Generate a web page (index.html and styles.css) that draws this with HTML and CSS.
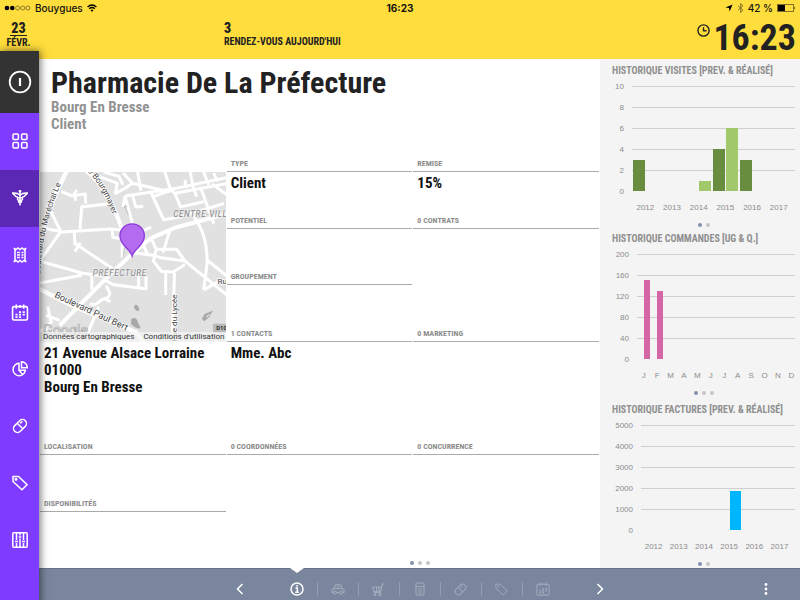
FILE: index.html
```html
<!DOCTYPE html>
<html lang="fr">
<head>
  <meta charset="UTF-8" />
  <meta name="viewport" content="width=device-width, initial-scale=1.0"/>
  <title>Pharmacie De La Préfecture</title>
  <link rel="stylesheet" href="styles.css">
</head>
<body>
  <!-- shared icons -->
  <svg width="0" height="0" class="sprite">
    <symbol id="i-calendar" viewBox="0 0 16 16">
      <rect x="1" y="2.5" width="14" height="12.5" rx="1.2"/>
      <path d="M4.5 0.5v4M11.5 0.5v4M8 1v2.5"/>
      <path d="M7 7.7h2M10.5 7.7h2M3.7 10h2M7 10h2M10.5 10h2M3.7 12.3h2M7 12.3h2" stroke-width="1.6"/>
    </symbol>
    <symbol id="i-pill" viewBox="0 0 16 16">
      <g transform="rotate(-45 8 8)">
        <rect x="0.5" y="4" width="15" height="8" rx="4"/>
        <path d="M8 4v8M10 6.3h3"/>
      </g>
    </symbol>
    <symbol id="i-tag" viewBox="0 0 16 16">
      <path d="M1 1.5h5.5l8.5 8.2-5 5L1 6.5z"/>
      <circle cx="4" cy="4.3" r="0.8"/>
    </symbol>
  </svg>

  <div class="app">
    <header class="header">
      <div class="status">
        <div class="carrier">
          <svg width="27" height="8" viewBox="0 0 27 8">
            <circle cx="3" cy="4" r="2.3"/><circle cx="8.3" cy="4" r="2.3"/>
            <g fill="none" stroke="#5f5426" stroke-width="0.7"><circle cx="13.6" cy="4" r="2"/><circle cx="18.8" cy="4" r="2"/><circle cx="24" cy="4" r="2"/></g>
          </svg>
          <span>Bouygues</span>
          <svg width="10" height="8" viewBox="0 0 10 8" fill="none" stroke="#000" stroke-width="1.4">
            <path d="M0.6 3Q5-1.2 9.4 3M2.3 4.8Q5 2.4 7.7 4.8"/><path d="M5 5.2L6.4 6.5 5 7.8 3.6 6.5z" fill="#000" stroke="none"/>
          </svg>
        </div>
        <b>16:23</b>
        <div class="battery">
          <svg width="8" height="8" viewBox="0 0 8 8"><path d="M7.6 0.4L4.6 7.6 4 4 0.4 3.6z"/></svg>
          <svg width="7" height="10" viewBox="0 0 7 10" fill="none" stroke="#6b5e2a" stroke-width="0.8"><path d="M1 2.8l5 4.4L3.6 9.4V0.6L6 2.8 1 7.2"/></svg>
          <span>42 %</span>
          <svg width="19" height="8" viewBox="0 0 19 8"><rect x="0.5" y="0.5" width="16" height="7" fill="none" stroke="#5f5426" stroke-width="0.8"/><rect x="1" y="1" width="7" height="6"/><path d="M17.5 2.5q1.4 1.5 0 3z"/></svg>
        </div>
      </div>
      <div class="topbar">
        <div class="date"><b>23</b><span>FÉVR.</span></div>
        <div class="meetings"><b>3</b><span>RENDEZ-VOUS AUJOURD'HUI</span></div>
        <div class="clock">
          <svg width="13" height="13" viewBox="0 0 13 13" fill="none" stroke="#222" stroke-width="1.4"><circle cx="6.5" cy="6.5" r="5.6"/><path d="M6.5 3.2v3.5h3"/></svg>
          <span>16:23</span>
        </div>
      </div>
    </header>

    <nav class="sidebar">
      <a href="#" class="power" aria-label="Accueil">
        <svg width="24" height="24" viewBox="0 0 24 24"><circle cx="12" cy="12" r="10.3" stroke-width="1.8"/><path d="M12 8v8" stroke-width="2.2"/></svg>
      </a>
      <div class="side-items">
        <a href="#" aria-label="Tableau de bord">
          <svg width="16" height="16" viewBox="0 0 16 16"><rect x="1" y="1" width="5.4" height="5.4" rx="1"/><rect x="9.6" y="1" width="5.4" height="5.4" rx="1"/><rect x="1" y="9.6" width="5.4" height="5.4" rx="1"/><rect x="9.6" y="9.6" width="5.4" height="5.4" rx="1"/></svg>
        </a>
        <a href="#" class="active" aria-label="Pharmacies">
          <svg width="16" height="16" viewBox="0 0 16 16" stroke-width="1.2"><path d="M8 1.5v14"/><circle cx="8" cy="1.3" r="0.7"/><path d="M8 5.2C6 3 3.5 2.8 0.7 3c0.4 1.4 1 2 2.2 2.2 0.3 1 1 1.5 2 1.6 0.5 0.8 1.6 1.2 3.1 0.9M8 5.2c2-2.2 4.5-2.4 7.3-2.2-0.4 1.4-1 2-2.2 2.2-0.3 1-1 1.5-2 1.6-0.5 0.8-1.6 1.2-3.1 0.9"/><path d="M5.7 8.2c-1 1.5 0.8 2 2.3 2.3 1.8 0.4 2.2 1.4 0.3 2.4M10.3 8.2c1 1.5-0.8 2-2.3 2.3-1.8 0.4-2.2 1.4-0.3 2.4"/></svg>
        </a>
        <a href="#" aria-label="Commandes">
          <svg width="14" height="16" viewBox="0 0 14 16"><path d="M1 1l2 1.5L5 1l2 1.5L9 1l2 1.5L13 1l-1 2v10l1 2-2-1.5L9 15l-2-1.5L5 15l-2-1.5L1 15l1-2V3z"/><path d="M4 5.5h3M4 8h3M4 10.5h3M8.5 5.5h2M8.5 8h2M8.5 10.5h2"/></svg>
        </a>
        <a href="#" aria-label="Agenda"><svg width="18" height="17"><use href="#i-calendar"/></svg></a>
        <a href="#" aria-label="Statistiques">
          <svg width="16" height="16" viewBox="0 0 16 16"><path d="M7 2.3A6.2 6.2 0 1 0 13.4 9.2H7z"/><path d="M9.5 0.8v5.9h5.8A6 6 0 0 0 9.5 0.8z"/><path d="M7 9.2l3.8 4.6"/></svg>
        </a>
        <a href="#" aria-label="Produits"><svg width="16" height="16"><use href="#i-pill"/></svg></a>
        <a href="#" aria-label="Promotions"><svg width="16" height="16"><use href="#i-tag"/></svg></a>
        <a href="#" aria-label="Réglages">
          <svg width="16" height="16" viewBox="0 0 16 16"><rect x="0.8" y="0.8" width="14.4" height="14.4" rx="1"/><path d="M4.5 1v7M4.5 11v4M8 1v2.500M8 6.500v8.500M11.500 1v7M11.500 11v4M3 9.500h3M6.700 5h2.600M10 9.500h3" /></svg>
        </a>
      </div>
    </nav>

    <main class="main">
      <section class="client">
        <div class="title">
          <h1>Pharmacie De La Préfecture</h1>
          <p>Bourg En Bresse</p>
          <p>Client</p>
        </div>

        <h3 class="c2 r2">TYPE</h3>
        <p class="value c2 r3">Client</p>
        <h3 class="c3 r2">REMISE</h3>
        <p class="value c3 r3">15%</p>
        <h3 class="c2 r3">POTENTIEL</h3>
        <h3 class="c3 r3">0 CONTRATS</h3>
        <h3 class="c2 r4">GROUPEMENT</h3>
        <h3 class="c2 r5">1 CONTACTS</h3>
        <p class="value c2 r6">Mme. Abc</p>
        <h3 class="c3 r5">0 MARKETING</h3>
        <p class="value c1 r6">21 Avenue Alsace Lorraine<br>01000<br>Bourg En Bresse</p>
        <h3 class="c1 r7">LOCALISATION</h3>
        <h3 class="c2 r7">0 COORDONNÉES</h3>
        <h3 class="c3 r7">0 CONCURRENCE</h3>
        <h3 class="c1 r8">DISPONIBILITÉS</h3>

        <div class="map">
          <svg viewBox="12 27 558 501" preserveAspectRatio="xMidYMid slice">
            <rect x="12" y="27" width="558" height="501" fill="#e1e1e1"/>
            <g fill="none" stroke="#fff" stroke-width="9" stroke-linejoin="round">
              <path d="M0 330C10 240 40 130 98 20" stroke-width="13"/>
              <path d="M150 20C200 60 235 120 262 205" stroke-width="12"/>
              <path d="M0 365L120 425 300 500 330 540" stroke-width="13"/>
              <path d="M75 480L215 338 290 268 345 222 420 190 580 148" stroke-width="12"/>
              <path d="M70 205L225 195 270 200M20 285L78 203 50 145M118 200L120 238 235 315M136 236L120 262M78 203L15 190"/>
              <path d="M10 288L140 325 205 335M15 355L140 332M170 335V375M205 345L235 360 330 372V335M308 335V370"/>
              <path d="M80 85L110 97 150 92 152 120M115 97L125 80M120 97L122 112M135 195L140 130 228 120"/>
              <path d="M190 40L245 60 240 90 268 75 290 60 400 85M205 27L250 40 262 65M268 98L420 75 575 42M268 98L290 180M290 60L262 30M268 98L262 130M290 95L300 130 322 128"/>
              <path d="M305 27L315 82M385 25L402 78 415 90 575 60M342 82L382 168 430 160 560 120M460 25L470 75M500 27L515 65M530 30L540 55M350 100L400 82M415 90L432 130 500 115M490 70L530 180M525 62L570 95"/>
              <path d="M470 155C500 200 512 240 510 300L500 375M510 287L570 335M445 50L448 75M470 75L480 100"/>
              <path d="M290 265L350 273 375 280 445 290 575 395M345 222L360 255 352 290 375 320 410 322 445 300M360 255L420 255 445 290M380 265L400 200M320 240L335 270"/>
              <path d="M388 325V390M414 325L408 500M260 195V280M230 195L232 220 262 225M290 180L310 205 345 190"/>
              <path d="M165 415C185 430 195 395 215 400C235 380 210 375 215 362M205 400L225 410M155 510L190 425M40 425L50 470 15 500M35 450L75 465M30 490L70 505M500 375L545 350"/>
            </g>
            <path d="M300 418q14 8 8 20q-12-2-14-14zM286 462q14-10 20 8l8 18q-14 4-28-12zM495 460l8-14 25-10-12 20-14 12z" fill="#a9a9a9"/>
            <path d="M508 455l10-8" stroke="#ddd" stroke-width="4"/>
            <path d="M262 280l4-30M268 130l10 24M266 134l2-8 7 4" fill="none" stroke="#aaa" stroke-width="2"/>
            <path id="marechal" d="M18 330C20 215 52 115 98 22" fill="none"/>
            <path id="bourgmayer" d="M148 16C195 60 222 115 242 190" fill="none"/>
            <g class="streets">
              <text><textPath href="#marechal">Boulevard du Maréchal Le</textPath></text>
              <text><textPath href="#bourgmayer">ue Bourgmayer</textPath></text>
              <text transform="translate(58 396) rotate(25)" font-size="27">Boulevard Paul Bert</text>
              <text transform="translate(420 528) rotate(-90)">Rue du Lycée</text>
              <text x="541" y="357">Rue</text>
            </g>
            <g class="areas">
              <text x="410" y="160">CENTRE-VILLE</text>
              <text x="173" y="333">PRÉFECTURE</text>
            </g>
            <rect x="528" y="475" width="50" height="27" fill="#b9b9b9"/>
            <text x="537" y="495" class="road">D1083</text>
            <text x="26" y="508" class="google">Google</text>
            <path d="M289 275C283 252 253 245 253 215a36 35 0 0 1 72 0C325 245 295 252 289 275z" fill="#b36cf0" stroke="#8d3bd8" stroke-width="4"/>
          </svg>
          <div class="credits"><a href="#">Données cartographiques</a><a href="#">Conditions d'utilisation</a></div>
        </div>
      </section>

      <aside class="charts">
        <section class="chart visits">
          <h2>HISTORIQUE VISITES [PREV. &amp; RÉALISÉ]</h2>
          <div class="graph">
            <div class="scale"><span>10</span><span>8</span><span>6</span><span>4</span><span>2</span><span>0</span></div>
            <div class="plot">
              <div class="group"><i style="height:30%"></i><i></i></div>
              <div class="group"></div>
              <div class="group"><i></i><i style="height:10%"></i></div>
              <div class="group"><i style="height:40%"></i><i style="height:60%"></i></div>
              <div class="group"><i style="height:30%"></i><i></i></div>
              <div class="group"></div>
            </div>
            <div class="labels"><span>2012</span><span>2013</span><span>2014</span><span>2015</span><span>2016</span><span>2017</span></div>
          </div>
          <div class="dots"><i class="on"></i><i></i></div>
        </section>
        <section class="chart orders">
          <h2>HISTORIQUE COMMANDES [UG &amp; Q.]</h2>
          <div class="graph">
            <div class="scale"><span>200</span><span>160</span><span>120</span><span>80</span><span>40</span><span>0</span></div>
            <div class="plot">
              <div class="group"><i></i><i style="height:75%"></i></div>
              <div class="group"><i></i><i style="height:65%"></i></div>
              <div class="group"></div><div class="group"></div><div class="group"></div><div class="group"></div><div class="group"></div>
              <div class="group"></div><div class="group"></div><div class="group"></div><div class="group"></div><div class="group"></div>
            </div>
            <div class="labels"><span>J</span><span>F</span><span>M</span><span>A</span><span>M</span><span>J</span><span>J</span><span>A</span><span>S</span><span>O</span><span>N</span><span>D</span></div>
          </div>
          <div class="dots"><i class="on"></i><i></i><i></i></div>
        </section>
        <section class="chart bills">
          <h2>HISTORIQUE FACTURES [PREV. &amp; RÉALISÉ]</h2>
          <div class="graph">
            <div class="scale"><span>5000</span><span>4000</span><span>3000</span><span>2000</span><span>1000</span><span>0</span></div>
            <div class="plot">
              <div class="group"></div><div class="group"></div><div class="group"></div>
              <div class="group"><i></i><i style="height:37%"></i></div>
              <div class="group"></div><div class="group"></div>
            </div>
            <div class="labels"><span>2012</span><span>2013</span><span>2014</span><span>2015</span><span>2016</span><span>2017</span></div>
          </div>
          <div class="dots"><i class="on"></i><i></i></div>
        </section>
      </aside>
      <div class="dots pages"><i class="on"></i><i></i><i></i></div>
    </main>

    <nav class="toolbar">
      <div class="tools">
        <button class="arrow" aria-label="Précédent"><svg width="8" height="12" viewBox="0 0 8 12"><path d="M6.500 1L1.500 6l5 5"/></svg></button>
        <div class="tabs">
          <button class="current" aria-label="Informations"><svg width="14" height="14" viewBox="0 0 14 14"><circle cx="7" cy="7" r="6"/><path d="M5.500 6h1.800v4M5.200 10.300h3.600M6.300 3.700h1.600" stroke-width="1.500"/></svg></button>
          <button aria-label="Déplacements"><svg width="14" height="12" viewBox="0 0 14 12"><path d="M2.500 9.500H1V6.500l2-1 1.500-3.500q3-1 5.500 0l1 3.500 2 1v3h-1.500M5.500 9.500h3M3 5.500h8M7 2v3.500"/><circle cx="4" cy="9.500" r="1.500"/><circle cx="10" cy="9.500" r="1.500"/></svg></button>
          <button aria-label="Panier"><svg width="13" height="13" viewBox="0 0 13 13"><path d="M0.500 4h9L8.500 8.500H2zM12.500 1h-2L8.500 9.500H2M4.500 4v4.500M7 4v4.500"/><circle cx="3" cy="11.500" r="1"/><circle cx="8" cy="11.500" r="1"/></svg></button>
          <button aria-label="Calculatrice"><svg width="10" height="14" viewBox="0 0 10 14"><rect x="1" y="1" width="8" height="12" rx="1"/><path d="M1 4.500h8M3 7h4M3 9h4M3 11h4"/></svg></button>
          <button aria-label="Produits"><svg width="13" height="13"><use href="#i-pill"/></svg></button>
          <button aria-label="Promotions"><svg width="13" height="13"><use href="#i-tag"/></svg></button>
          <button aria-label="Agenda"><svg width="14" height="14"><use href="#i-calendar"/></svg></button>
        </div>
        <button class="arrow" aria-label="Suivant"><svg width="8" height="12" viewBox="0 0 8 12"><path d="M1.500 1l5 5-5 5"/></svg></button>
      </div>
      <button class="more" aria-label="Plus"><svg width="4" height="12" viewBox="0 0 4 12"><circle cx="2" cy="1.500" r="1.400"/><circle cx="2" cy="6" r="1.400"/><circle cx="2" cy="10.500" r="1.400"/></svg></button>
    </nav>
  </div>
</body>
</html>
```
FILE: styles.css
```css
* {
  box-sizing: border-box;
}
body {
  margin: 0;
  font-family: "Liberation Sans Narrow", "Arial Narrow", "Roboto Condensed", "Liberation Sans", sans-serif;
  font-weight: bold;
  color: #222;
  background: white;
}
h1, h2, h3, p {
  margin: 0;
}
a {
  color: inherit;
  text-decoration: none;
}
.sprite {
  position: absolute;
}
.app {
  display: grid;
  grid-template-columns: 39px 1fr;
  grid-template-rows: auto 1fr 41px;
  min-height: 100vh;
}

/* yellow header */
.header {
  grid-column: 1 / -1;
  background: #ffdd3c;
  height: 59px;
}
.status {
  display: grid;
  grid-template-columns: 1fr auto 1fr;
  align-items: center;
  height: 16px;
  padding: 0 4px;
  font-family: Inter, "Liberation Sans", sans-serif;
  font-size: 10px;
  font-weight: 500;
  color: #111;
}
.carrier, .battery {
  display: flex;
  align-items: center;
  gap: 4px;
}
.battery {
  justify-content: flex-end;
}
.topbar {
  display: grid;
  grid-template-columns: 37px calc((100% - 239px) / 3) 1fr auto;
  font-size: 10px;
  line-height: 14px;
}
.topbar b {
  display: block;
  font-size: 14px;
}
.date {
  display: flex;
  flex-direction: column;
  align-items: center;
  padding-top: 5px;
}
.date b {
  border-bottom: 1px solid #222;
  padding: 0 1px;
}
.meetings {
  grid-column: 3;
  padding-top: 5px;
}
.clock {
  display: flex;
  padding: 8px 4px 0 0;
  gap: 3px;
  font-size: 36px;
  line-height: 28px;
}

/* left menu, overlaps the header a little */
.sidebar {
  grid-row: 2 / 4;
  display: flex;
  flex-direction: column;
  margin-top: -8px;
  padding-bottom: 41px;
  background: #7f3bff;
  box-shadow: 1px 0 8px rgba(0, 0, 0, 0.6);
  z-index: 2;
}
.sidebar a {
  display: flex;
  align-items: center;
  justify-content: center;
}
.sidebar svg {
  fill: none;
  stroke: white;
  stroke-width: 1.5;
}
.power {
  height: 62px;
  background: #333;
}
.side-items {
  flex: 1;
  display: grid;
  grid-auto-rows: 1fr;
}
.sidebar .active {
  background: #5b28b5;
}

.main {
  position: relative;
  display: grid;
  grid-template-columns: 1fr 200px;
}

/* client sheet */
.client {
  display: grid;
  grid-template-columns: repeat(3, 1fr);
  grid-template-rows: repeat(9, 1fr);
  column-gap: 1px;
  padding: 0 1px;
}
.title {
  grid-area: 1 / 1 / 3 / 4;
  padding: 7px 0 0 11px;
  font-size: 15px;
  line-height: 17px;
  color: #929292;
}
.title h1 {
  font-size: 30px;
  line-height: 33px;
  color: #222;
}
.client h3 {
  align-self: end;
  padding: 0 4px 1px;
  border-bottom: 1px solid #aaa;
  font-size: 8px;
  line-height: 12px;
  color: #8c8c8c;
}
.value {
  padding: 3px 4px;
  font-size: 15px;
  line-height: 17px;
  color: #111;
}
.c1 { grid-column: 1; }
.c2 { grid-column: 2; }
.c3 { grid-column: 3; }
.r2 { grid-row: 2; }
.r3 { grid-row: 3; }
.r4 { grid-row: 4; }
.r5 { grid-row: 5; }
.value.r6 { grid-row: 6 / 8; }
.r7 { grid-row: 7; }
.r8 { grid-row: 8; }

.map {
  grid-area: 3 / 1 / 6 / 2;
  position: relative;
  overflow: hidden;
  font-family: Roboto, sans-serif;
  font-weight: normal;
}
.map svg {
  position: absolute;
  width: 100%;
  height: 100%;
}
.streets {
  font-size: 24px;
  fill: #444;
  stroke: white;
  stroke-width: 4px;
  paint-order: stroke;
}
.areas {
  font-size: 24px;
  font-style: italic;
  letter-spacing: 2px;
  fill: #858585;
  stroke: #eee;
  stroke-width: 4px;
  paint-order: stroke;
}
.road {
  font-size: 18px;
  font-weight: bold;
  fill: #333;
}
.google {
  font-size: 42px;
  fill: #eee;
  stroke: #aaa;
  stroke-width: 2px;
}
.credits {
  position: absolute;
  left: 0;
  right: 0;
  bottom: 0;
  display: flex;
  gap: 9px;
  padding: 0 3px;
  background: rgba(245, 245, 245, 0.7);
  font-size: 8px;
  line-height: 10px;
  color: #333;
  white-space: nowrap;
}

/* charts */
.charts {
  display: grid;
  grid-template-rows: 165fr 168fr 167fr;
  background: #f4f4f4;
}
.chart {
  padding: 5px 5px 0 12px;
}
.chart h2 {
  font-size: 10px;
  line-height: 14px;
  color: #8f8f8f;
}
.graph {
  display: grid;
  grid-template-columns: 20px 1fr;
  margin-top: -2px;
  font-family: "Liberation Sans", Arial, sans-serif;
  font-size: 8px;
  font-weight: normal;
  color: #8c8c8c;
}
.orders .graph {
  grid-template-columns: 25px 1fr;
}
.bills .graph {
  grid-template-columns: 29px 1fr;
}
.scale {
  display: flex;
  flex-direction: column;
  padding-right: 8px;
  text-align: right;
  line-height: 21px;
}
.plot {
  display: flex;
  height: 105px;
  margin-top: 10px;
  padding-right: 3px;
  background: repeating-linear-gradient(#cfcfcf 0 1px, transparent 1px 21px);
}
.group {
  flex: 1;
  display: flex;
  align-items: flex-end;
  gap: 1px;
  padding: 0 1px;
}
.group i {
  flex: 1;
  background: #688d3e;
}
.group i + i {
  background: #a1c96b;
}
.orders .group {
  padding: 0;
}
.orders .group i + i {
  background: #d466a6;
}
.bills .group i + i {
  background: #00b7ff;
}
.labels {
  grid-column: 2;
  display: flex;
  padding-right: 3px;
  line-height: 12px;
}
.labels span {
  flex: 1;
  text-align: center;
}
.orders .plot {
  padding-right: 0;
}
.orders .labels {
  padding: 0;
  margin-right: -3px;
}
.dots {
  display: flex;
  justify-content: center;
  gap: 4px;
  margin-top: 9px;
}
.dots i {
  width: 4px;
  height: 4px;
  border-radius: 50%;
  background: #c4c4c4;
}
.dots .on {
  background: #8490ab;
}
.pages {
  position: absolute;
  left: 0;
  right: 0;
  bottom: 3px;
}

/* bottom bar */
.toolbar {
  grid-column: 2;
  display: grid;
  grid-template-columns: 1fr auto 1fr;
  background: #7a869e;
  border-top: 1px solid #66728b;
}
.tools {
  grid-column: 2;
  display: flex;
  gap: 16px;
}
.tabs {
  display: flex;
}
.toolbar button {
  position: relative;
  display: flex;
  align-items: center;
  justify-content: center;
  width: 41px;
  padding: 0;
  border: none;
  background: none;
  cursor: pointer;
}
.toolbar svg {
  fill: none;
  stroke: #a0a9ba;
  stroke-width: 1.2;
}
.tabs button + button::before {
  content: "";
  position: absolute;
  left: 0;
  top: 13px;
  width: 1px;
  height: 14px;
  background: #949eb1;
}
.toolbar .arrow svg, .toolbar .current svg {
  stroke: white;
  stroke-width: 1.5;
}
.current::after {
  content: "";
  position: absolute;
  top: -1px;
  border: 7px solid transparent;
  border-top: 5px solid white;
  border-bottom: none;
}
.toolbar .more {
  justify-self: end;
  margin-right: 14px;
}
.more svg {
  fill: white;
  stroke: none;
}
```
